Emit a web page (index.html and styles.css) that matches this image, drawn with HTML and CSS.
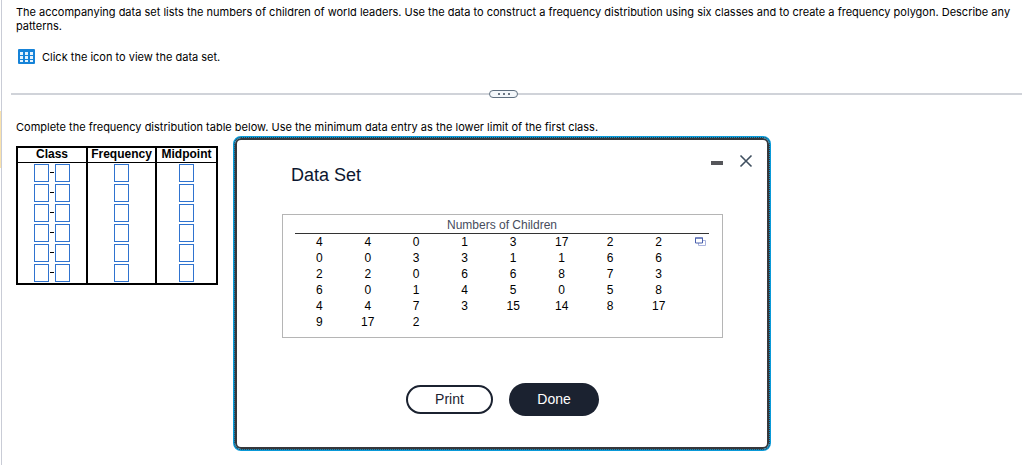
FILE: index.html
```html
<!DOCTYPE html>
<html lang="en">
<head>
<meta charset="utf-8">
<title>Frequency Distribution</title>
<link rel="stylesheet" href="styles.css">
</head>
<body>
<main class="page">
  <p class="intro">The accompanying data set lists the numbers of children of world leaders. Use the data to construct a frequency distribution using six classes and to create a frequency polygon. Describe any patterns.</p>
  <button class="data-link" type="button">
    <svg width="17" height="15" viewBox="0 0 17 15" aria-hidden="true">
      <rect width="17" height="15" rx="1" fill="#1683d8"/>
      <g fill="#e6f3fd">
        <path d="M2 3h3v3H2zM7 3h3v3H7zM12 3h3v3h-3z"/>
        <path d="M2 7h3v3H2zM7 7h3v3H7zM12 7h3v3h-3z"/>
        <path d="M2 11h3v2H2zM7 11h3v2H7zM12 11h3v2h-3z"/>
      </g>
    </svg>
    <span>Click the icon to view the data set.</span>
  </button>
  <div class="divider">
    <button class="more" type="button" aria-label="More"><i></i><i></i><i></i></button>
  </div>
  <p class="prompt">Complete the frequency distribution table below. Use the minimum data entry as the lower limit of the first class.</p>
  <table class="freq">
    <thead><tr><th class="c-class">Class</th><th class="c-freq">Frequency</th><th class="c-mid">Midpoint</th></tr></thead>
    <tbody>
      <tr><td><div class="cell"><input aria-label="Class 1 lower"><b></b><input aria-label="Class 1 upper"></div></td><td><div class="cell"><input aria-label="Frequency 1"></div></td><td><div class="cell"><input aria-label="Midpoint 1"></div></td></tr>
      <tr><td><div class="cell"><input aria-label="Class 2 lower"><b></b><input aria-label="Class 2 upper"></div></td><td><div class="cell"><input aria-label="Frequency 2"></div></td><td><div class="cell"><input aria-label="Midpoint 2"></div></td></tr>
      <tr><td><div class="cell"><input aria-label="Class 3 lower"><b></b><input aria-label="Class 3 upper"></div></td><td><div class="cell"><input aria-label="Frequency 3"></div></td><td><div class="cell"><input aria-label="Midpoint 3"></div></td></tr>
      <tr><td><div class="cell"><input aria-label="Class 4 lower"><b></b><input aria-label="Class 4 upper"></div></td><td><div class="cell"><input aria-label="Frequency 4"></div></td><td><div class="cell"><input aria-label="Midpoint 4"></div></td></tr>
      <tr><td><div class="cell"><input aria-label="Class 5 lower"><b></b><input aria-label="Class 5 upper"></div></td><td><div class="cell"><input aria-label="Frequency 5"></div></td><td><div class="cell"><input aria-label="Midpoint 5"></div></td></tr>
      <tr><td><div class="cell"><input aria-label="Class 6 lower"><b></b><input aria-label="Class 6 upper"></div></td><td><div class="cell"><input aria-label="Frequency 6"></div></td><td><div class="cell"><input aria-label="Midpoint 6"></div></td></tr>
    </tbody>
  </table>
</main>
<span class="marker"></span>

<section class="dialog" role="dialog" aria-labelledby="dialog-title">
  <header class="dialog-head">
    <h2 id="dialog-title">Data Set</h2>
    <div class="tools">
      <button type="button" aria-label="Minimize"><svg width="12" height="14" viewBox="0 0 12 14"><path d="M0 7h12v4H0z" fill="#55565a"/></svg></button>
      <button type="button" aria-label="Close"><svg width="14" height="14" viewBox="0 0 14 14"><path d="M1.5 1.5l11 11M12.5 1.5l-11 11" stroke="#3f4f5f" stroke-width="1.6" fill="none"/></svg></button>
    </div>
  </header>
  <div class="data-box">
    <table class="data">
      <colgroup><col span="8"><col class="c-copy"></colgroup>
      <thead><tr><th colspan="9">Numbers of Children</th></tr></thead>
      <tbody>
        <tr><td>4</td><td>4</td><td>0</td><td>1</td><td>3</td><td>17</td><td>2</td><td>2</td><td class="copy"><button type="button" aria-label="Copy data"><svg width="12" height="10" viewBox="0 0 12 10"><path d="M3.5 3.5h7v5h-7z" fill="#fff" stroke="#a9b3dd"/><path d="M.5 1h7v5h-7z" fill="#fff" stroke="#4a60ad"/><path d="M0 .5h8v1H0z" fill="#4a60ad"/></svg></button></td></tr>
        <tr><td>0</td><td>0</td><td>3</td><td>3</td><td>1</td><td>1</td><td>6</td><td>6</td><td></td></tr>
        <tr><td>2</td><td>2</td><td>0</td><td>6</td><td>6</td><td>8</td><td>7</td><td>3</td><td></td></tr>
        <tr><td>6</td><td>0</td><td>1</td><td>4</td><td>5</td><td>0</td><td>5</td><td>8</td><td></td></tr>
        <tr><td>4</td><td>4</td><td>7</td><td>3</td><td>15</td><td>14</td><td>8</td><td>17</td><td></td></tr>
        <tr><td>9</td><td>17</td><td>2</td><td></td><td></td><td></td><td></td><td></td><td></td></tr>
      </tbody>
    </table>
  </div>
  <footer class="actions">
    <button class="print" type="button">Print</button>
    <button class="done" type="button">Done</button>
  </footer>
</section>
</body>
</html>
```
FILE: styles.css
```css
* { box-sizing: border-box; }
body {
  margin: 0;
  background: #fff;
  color: #000;
  font: 11px/14px Inter, "Liberation Sans", Arial, sans-serif;
}
button {
  margin: 0;
  padding: 0;
  border: 0;
  background: none;
  color: inherit;
  font: inherit;
  cursor: pointer;
}
svg { display: block; }
p { margin: 0; }
.page {
  min-height: 100vh;
  margin-left: 1px;
  padding: 5px 8px 0 14px;
  border-left: 1px solid #c9ccd6;
}
.data-link {
  display: flex;
  align-items: center;
  gap: 7px;
  margin: 16px 0 0 2px;
}
.divider {
  display: flex;
  align-items: center;
  height: 9px;
  margin: 25px -6px 0 -5px;
}
.divider::before,
.divider::after {
  content: "";
  height: 2px;
  background: #d0d3d9;
}
.divider::before { flex: 479; }
.divider::after { flex: 505; }
.more {
  display: flex;
  align-items: center;
  justify-content: center;
  gap: 3px;
  width: 29px;
  height: 8px;
  border: 1px solid #5f6f80;
  border-radius: 4px;
  background: #f4f7fa;
}
.more i {
  width: 2px;
  height: 2px;
  background: #6b7683;
}
.prompt { margin-top: 22px; }
.freq,
.dialog {
  font-family: "Liberation Sans", Arial, sans-serif;
  font-size: 12px;
}
.freq {
  margin-top: 12px;
  border: 2px solid #000;
  border-collapse: collapse;
}
.freq th,
.freq td {
  padding: 0;
  border-left: 2px solid #000;
}
.freq th {
  height: 15px;
  border-bottom: 1px solid #000;
  line-height: 13px;
}
.c-class { width: 70px; }
.c-freq { width: 69px; }
.c-mid { width: 61px; }
.cell {
  display: flex;
  align-items: center;
  justify-content: center;
  height: 20px;
}
.cell input {
  width: 15px;
  height: 18px;
  padding: 0;
  border: 1px solid #2f73cf;
  background: #fff;
  font: inherit;
  text-align: center;
}
.cell b {
  width: 4px;
  height: 1px;
  margin: 0 1px;
  background: #000;
}
.marker {
  position: absolute;
  top: 111px;
  left: 0;
  width: 1px;
  height: 57px;
  background: #fbe3ac;
}
.dialog {
  position: absolute;
  top: 136px;
  left: 233px;
  right: 253px;
  padding: 13px 46px 33px 47px;
  border: 2px solid #0a9ad8;
  border-radius: 8px;
  background: #fff;
  box-shadow: inset 0 0 0 2px #36383c;
}
.dialog::before {
  content: "";
  position: absolute;
  inset: -1px;
  border: 1px dotted #36383c;
  border-radius: 7px;
  pointer-events: none;
}
.dialog-head {
  display: flex;
  justify-content: space-between;
  margin: 0 -30px 0 9px;
}
.dialog-head h2 {
  margin: 12px 0 0;
  color: #0c1730;
  font-size: 18px;
  font-weight: 400;
  line-height: 24px;
}
.tools {
  display: flex;
  align-items: flex-start;
  gap: 16px;
  padding: 3px 0 0;
}
.data-box {
  margin-top: 27px;
  padding: 4px 13px 7px 12px;
  border: 1px solid #b5b5b5;
}
.data {
  width: 100%;
  border-collapse: collapse;
  table-layout: fixed;
}
.c-copy { width: 26px; }
.data th {
  height: 14px;
  padding: 0;
  border-bottom: 1px solid #333;
  color: #474c5c;
  font-weight: 400;
  line-height: 13px;
}
.data td {
  height: 16px;
  padding: 0;
  line-height: 16px;
  text-align: center;
}
.data .copy button {
  display: block;
  margin: 0 0 0 auto;
}
.data .copy { padding-right: 2px; }
.actions {
  display: flex;
  align-items: center;
  justify-content: center;
  gap: 16px;
  margin-top: 45px;
}
.actions button {
  border-radius: 17px;
  color: #1b2230;
  font-size: 14px;
}
.actions .print {
  width: 87px;
  height: 29px;
  border: 2px solid #1b2230;
}
.actions .done {
  width: 90px;
  height: 33px;
  background: #1b2230;
  color: #fff;
}
```
